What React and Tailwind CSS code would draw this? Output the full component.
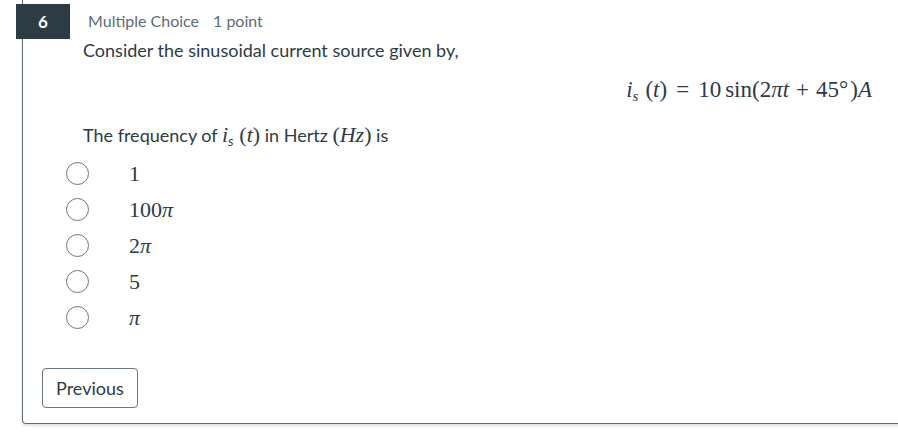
import React from "react";

const lato = { fontFamily: "Lato, 'Open Sans', sans-serif" };
const serif = { fontFamily: "'Liberation Serif', 'DejaVu Serif', serif" };

function M({ children }) {
    return <span className="italic" style={serif}>{children}</span>;
}

function R({ children }) {
    return <span style={serif}>{children}</span>;
}

const choices = [
    <R>1</R>,
    <R>100<M>π</M></R>,
    <R>2<M>π</M></R>,
    <R>5</R>,
    <M>π</M>,
];

export default function App() {
    return (
        <div className="w-[898px] h-[443px] bg-white overflow-hidden text-[#2d3b45]" style={lato}>
            <div className="relative ml-[22px] w-[900px] h-[424px] border-l border-b border-[#5f6b74] rounded-bl-[4px] shadow-[0_2px_3px_rgba(0,0,0,0.12)]">
                <div className="absolute left-[-7px] top-[4px] w-[54px] h-[35px] bg-[#2d3b45] text-white flex items-center justify-center text-[17px] font-bold">
                    6
                </div>
                <div className="pl-[60px] pr-[26px]">
                    <div className="h-[38px] pt-[11px] pl-[5px] flex gap-[14px] text-[16px] leading-[20px] text-[#5f6b74]">
                        <span>Multiple Choice</span>
                        <span>1 point</span>
                    </div>
                    <p className="text-[18px] leading-[24px]">Consider the sinusoidal current source given by,</p>
                    <div className="mt-[14px] h-[28px] flex justify-end items-center text-[23px] leading-[28px] pr-[24px]">
                        <span style={serif}>
                            <M>i</M><sub className="text-[15px] italic">s</sub>
                            <span className="ml-[7px]">(</span><M>t</M>)
                            <span className="mx-[9px]">=</span>
                            10<span className="ml-[4px]">sin</span>(2<M>πt</M>
                            <span className="mx-[7px]">+</span>
                            45°<span className="ml-[2px]">)</span><M>A</M>
                        </span>
                    </div>
                    <p className="mt-[16px] h-[28px] text-[18px] leading-[28px]">
                        The frequency of <span className="text-[22px]"><M>i</M><sub className="text-[14px] italic">s</sub> <R>(</R><M>t</M><R>)</R></span> in Hertz <span className="text-[22px]"><R>(</R><M>Hz</M><R>)</R></span> is
                    </p>
                    <div className="mt-[13px] flex flex-col gap-[12px]">
                        {choices.map((c, i) => (
                            <label key={i} className="flex items-center h-[24px] -ml-[17px]">
                                <span className="w-[23px] h-[23px] rounded-full border border-[#6b7780] bg-white shrink-0"></span>
                                <span className="ml-[40px] text-[22px] leading-[24px]">{c}</span>
                            </label>
                        ))}
                    </div>
                </div>
                <div className="pl-[19px] mt-[39px]">
                    <button className="h-[40px] px-[13px] border border-[#6b7780] rounded-[4px] text-[18px] bg-white text-[#2d3b45]" style={lato}>
                        Previous
                    </button>
                </div>
            </div>
        </div>
    );
}
